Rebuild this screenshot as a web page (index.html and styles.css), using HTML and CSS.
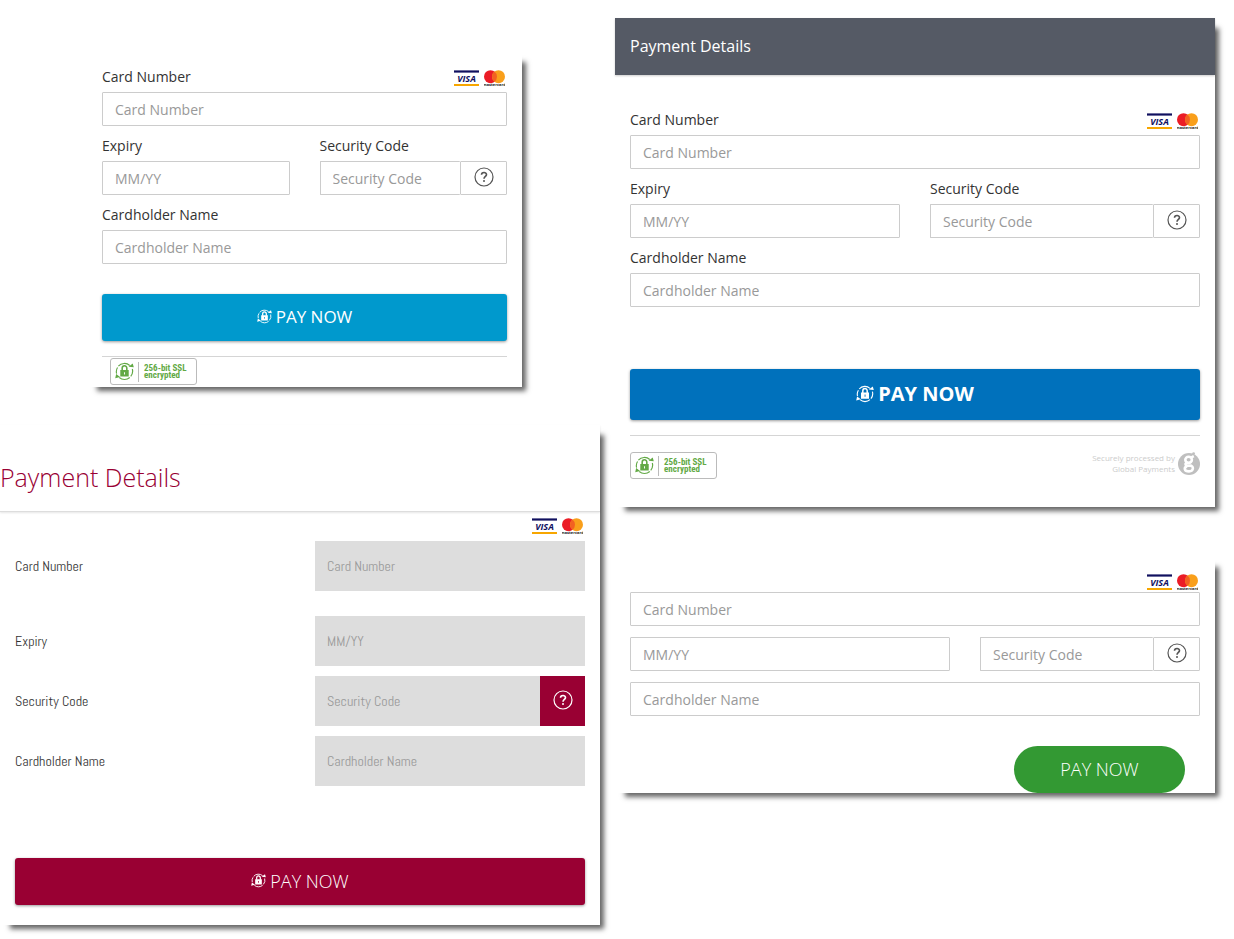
FILE: index.html
```html
<!DOCTYPE html>
<html lang="en">
<head>
<meta charset="utf-8">
<title>Payment Details</title>
<link rel="stylesheet" href="styles.css">
</head>
<body>
<svg class="sprite" aria-hidden="true">
  <symbol id="visa" viewBox="0 0 25 17">
    <rect y="0.4" width="25" height="2.2" fill="#10105f"/>
    <rect y="14" width="25" height="2" fill="#f7a600"/>
    <text x="12.5" y="11.6" text-anchor="middle" class="visa-word">VISA</text>
  </symbol>
  <symbol id="mastercard" viewBox="0 0 21 17">
    <circle cx="6.5" cy="6.7" r="6.5" fill="#eb1c26"/>
    <circle cx="14.5" cy="6.7" r="6.5" fill="#f99f1b"/>
    <path d="M10.5 1.6a6.5 6.5 0 0 1 0 10.2a6.5 6.5 0 0 1 0-10.2z" fill="#f26122"/>
    <text x="10.8" y="16.2" text-anchor="middle" class="mc-word">mastercard.</text>
  </symbol>
  <symbol id="secure" viewBox="0 0 18 18">
    <path d="M3.2 4A7.6 7.6 0 0 1 14 3.3M16.4 6.6A7.6 7.6 0 0 1 14.9 13.6M14 14.7A7.6 7.6 0 0 1 4 14.7M1.5 11A7.6 7.6 0 0 1 2.4 5.2" fill="none" stroke="currentColor" stroke-width="1.1"/>
    <path d="M12.8 4.6L17.8 5L16.8 1.4zM0.2 15.4L1.1 11.4L4.8 14.2z" fill="currentColor"/>
    <path d="M6.8 8V5.9a2.2 2.4 0 0 1 4.4 0V8" fill="none" stroke="currentColor" stroke-width="1.5"/>
    <path fill-rule="evenodd" d="M5 7.6h8v6.2H5zM8.6 9.6v2.2h.9V9.6z" fill="currentColor"/>
  </symbol>
  <symbol id="help" viewBox="0 0 20 20">
    <circle cx="10" cy="10" r="9" fill="none" stroke="currentColor" stroke-width="1.2"/>
    <path d="M7.5 7.8C7.5 4.7 12.6 4.8 12.5 7.6C12.4 9.4 10 9.4 10 11.8" fill="none" stroke="currentColor" stroke-width="1.6"/>
    <circle cx="10" cy="14" r="1" fill="currentColor"/>
  </symbol>
  <symbol id="globalpay" viewBox="0 0 22 23">
    <circle cx="11" cy="12" r="11" fill="#bfbfbf"/>
    <circle cx="15.6" cy="1.6" r="1.4" fill="#bfbfbf"/>
    <g fill="none" stroke="#fff" stroke-width="2.6">
      <ellipse cx="10.6" cy="7.8" rx="3.3" ry="3"/>
      <path d="M13.4 5.4L15.8 4.2M8.3 10.6C6.6 12.4 7.6 13.6 10 13.6H12C16 13.6 16 19.4 11 19.4C5.8 19.4 5.8 15.4 9 14.2"/>
    </g>
  </symbol>
</svg>

<main class="gallery">
  <div class="column column-left">
    <form class="card card-compact">
      <div class="field">
        <div class="field-head">
          <label for="a-number">Card Number</label>
          <span class="brands"><svg class="visa" role="img" aria-label="Visa"><use href="#visa"/></svg><svg class="mastercard" role="img" aria-label="Mastercard"><use href="#mastercard"/></svg></span>
        </div>
        <input id="a-number" type="text" placeholder="Card Number">
      </div>
      <div class="field-row">
        <div class="field">
          <div class="field-head"><label for="a-expiry">Expiry</label></div>
          <input id="a-expiry" type="text" placeholder="MM/YY">
        </div>
        <div class="field">
          <div class="field-head"><label for="a-code">Security Code</label></div>
          <div class="input-group">
            <input id="a-code" type="text" placeholder="Security Code">
            <button class="help" type="button" aria-label="Help"><svg><use href="#help"/></svg></button>
          </div>
        </div>
      </div>
      <div class="field">
        <div class="field-head"><label for="a-name">Cardholder Name</label></div>
        <input id="a-name" type="text" placeholder="Cardholder Name">
      </div>
      <button class="pay pay-sky" type="submit"><svg><use href="#secure"/></svg>PAY NOW</button>
      <footer class="card-foot">
        <div class="ssl"><svg><use href="#secure"/></svg><span class="ssl-text">256-bit SSL<br>encrypted</span></div>
      </footer>
    </form>

    <form class="card card-maroon">
      <h2 class="maroon-title">Payment Details</h2>
      <div class="maroon-body">
        <span class="brands"><svg class="visa" role="img" aria-label="Visa"><use href="#visa"/></svg><svg class="mastercard" role="img" aria-label="Mastercard"><use href="#mastercard"/></svg></span>
        <div class="line line-first">
          <label for="c-number">Card Number</label>
          <input id="c-number" type="text" placeholder="Card Number">
        </div>
        <div class="line">
          <label for="c-expiry">Expiry</label>
          <input id="c-expiry" type="text" placeholder="MM/YY">
        </div>
        <div class="line">
          <label for="c-code">Security Code</label>
          <div class="input-group">
            <input id="c-code" type="text" placeholder="Security Code">
            <button class="help" type="button" aria-label="Help"><svg><use href="#help"/></svg></button>
          </div>
        </div>
        <div class="line">
          <label for="c-name">Cardholder Name</label>
          <input id="c-name" type="text" placeholder="Cardholder Name">
        </div>
        <button class="pay pay-maroon" type="submit"><svg><use href="#secure"/></svg>PAY NOW</button>
      </div>
    </form>
  </div>

  <div class="column column-right">
    <form class="card card-full">
      <h2 class="bar-title">Payment Details</h2>
      <div class="full-body">
        <div class="field">
          <div class="field-head">
            <label for="b-number">Card Number</label>
            <span class="brands"><svg class="visa" role="img" aria-label="Visa"><use href="#visa"/></svg><svg class="mastercard" role="img" aria-label="Mastercard"><use href="#mastercard"/></svg></span>
          </div>
          <input id="b-number" type="text" placeholder="Card Number">
        </div>
        <div class="field-row">
          <div class="field">
            <div class="field-head"><label for="b-expiry">Expiry</label></div>
            <input id="b-expiry" type="text" placeholder="MM/YY">
          </div>
          <div class="field">
            <div class="field-head"><label for="b-code">Security Code</label></div>
            <div class="input-group">
              <input id="b-code" type="text" placeholder="Security Code">
              <button class="help" type="button" aria-label="Help"><svg><use href="#help"/></svg></button>
            </div>
          </div>
        </div>
        <div class="field">
          <div class="field-head"><label for="b-name">Cardholder Name</label></div>
          <input id="b-name" type="text" placeholder="Cardholder Name">
        </div>
        <button class="pay pay-blue" type="submit"><svg><use href="#secure"/></svg>PAY NOW</button>
        <footer class="card-foot">
          <div class="ssl"><svg><use href="#secure"/></svg><span class="ssl-text">256-bit SSL<br>encrypted</span></div>
          <div class="processor"><span>Securely processed by<br>Global Payments</span><svg><use href="#globalpay"/></svg></div>
        </footer>
      </div>
    </form>

    <form class="card card-plain">
      <span class="brands"><svg class="visa" role="img" aria-label="Visa"><use href="#visa"/></svg><svg class="mastercard" role="img" aria-label="Mastercard"><use href="#mastercard"/></svg></span>
      <input type="text" aria-label="Card Number" placeholder="Card Number">
      <div class="plain-row">
        <input type="text" aria-label="Expiry" placeholder="MM/YY">
        <div class="input-group">
          <input type="text" aria-label="Security Code" placeholder="Security Code">
          <button class="help" type="button" aria-label="Help"><svg><use href="#help"/></svg></button>
        </div>
      </div>
      <input type="text" aria-label="Cardholder Name" placeholder="Cardholder Name">
      <button class="pay pay-green" type="submit">PAY NOW</button>
    </form>
  </div>
</main>
</body>
</html>
```
FILE: styles.css
```css
* {
  box-sizing: border-box;
}

body {
  margin: 0;
  background: #fff;
  color: #333;
  font-family: "Open Sans", sans-serif;
  font-size: 14px;
  line-height: 20px;
}

input,
button {
  margin: 0;
  font: inherit;
}

.sprite {
  display: none;
}

.visa-word {
  font: italic 700 9px "Open Sans", sans-serif;
  fill: #10105f;
}

.mc-word {
  font: 700 4px "Open Sans", sans-serif;
  fill: #222;
}

.gallery {
  display: grid;
  grid-template-columns: 1fr 1fr;
  gap: 15px;
  padding: 0 19px 14px 0;
}

.column {
  display: flex;
  flex-direction: column;
}

.column-left {
  gap: 38px;
  padding-top: 52px;
}

.column-right {
  gap: 50px;
  padding-top: 18px;
}

.card {
  background: #fff;
  box-shadow: 7px 7px 5px -3px #666;
}

/* Fields */

.field {
  min-width: 0;
  margin-bottom: 10px;
}

.field-head {
  display: flex;
  justify-content: space-between;
  align-items: flex-end;
  height: 20px;
  margin-bottom: 5px;
}

.field-row {
  display: grid;
  grid-template-columns: 1fr 1fr;
  gap: 30px;
}

input {
  display: block;
  width: 100%;
  min-width: 0;
  height: 34px;
  padding: 1px 12px 0;
  border: 1px solid #ccc;
  border-radius: 1px;
  background: #fff;
  color: #333;
}

input::placeholder {
  color: #999;
  opacity: 1;
}

.input-group {
  display: flex;
  min-width: 0;
}

.input-group input {
  flex: 1;
  border-right: 0;
}

.help {
  display: flex;
  flex: none;
  justify-content: center;
  align-items: center;
  width: 47px;
  padding: 0 0 2px;
  border: 1px solid #ccc;
  border-radius: 1px;
  background: #fff;
  color: #555;
}

.help svg {
  width: 20px;
  height: 20px;
}

.brands {
  display: flex;
  justify-content: flex-end;
  gap: 5px;
  padding-right: 2px;
}

.visa {
  width: 25px;
  height: 17px;
}

.mastercard {
  width: 21px;
  height: 17px;
}

/* Pay buttons */

.pay {
  display: flex;
  justify-content: center;
  align-items: center;
  gap: 4px;
  width: 100%;
  height: 47px;
  padding: 0 0 2px;
  border: 0;
  border-radius: 3px;
  box-shadow: 0 1px 3px rgba(0, 0, 0, 0.4);
  color: #fff;
  font-size: 18px;
  font-weight: 300;
}

.pay svg {
  width: 15px;
  height: 15px;
}

.pay-sky {
  margin-top: 30px;
  background: #0099cd;
  font-size: 17px;
  font-weight: 400;
}

.pay-blue {
  height: 51px;
  margin-top: 62px;
  background: #0071bc;
  font-size: 20px;
  font-weight: 700;
}

.pay-blue svg {
  width: 18px;
  height: 18px;
}

.pay-maroon {
  margin-top: 72px;
  background: #990033;
}

.pay-green {
  align-self: flex-end;
  width: 171px;
  margin: 19px 15px 0 0;
  border-radius: 24px;
  background: #339933;
  box-shadow: none;
}

/* Footer */

.card-foot {
  display: flex;
  justify-content: space-between;
  margin-top: 15px;
  border-top: 1px solid #d5d5d5;
}

.ssl {
  display: flex;
  align-items: center;
  width: 87px;
  height: 27px;
  padding: 0 4px;
  border: 1px solid #bbb;
  border-radius: 3px;
  color: #62a945;
}

.ssl svg {
  width: 19px;
  height: 19px;
}

.ssl-text {
  margin-left: 4px;
  padding: 3px 0 3px 5px;
  border-left: 1px solid #bbb;
  font: 700 9px/7px "Roboto Condensed", "Liberation Sans Narrow", Roboto, sans-serif;
}

.processor {
  display: flex;
  gap: 3px;
  color: #ccc;
  font-size: 8px;
  line-height: 11px;
  text-align: right;
}

.processor svg {
  width: 22px;
  height: 23px;
}

/* Compact form */

.card-compact {
  width: 435px;
  max-width: 100%;
  margin-left: 87px;
  padding: 15px 15px 2px;
}

.card-compact .ssl {
  margin: 1px 0 0 8px;
}

/* Full form */

.bar-title {
  margin: 0;
  padding: 16px 15px 17px;
  background: #555a65;
  box-shadow: 0 1px 2px rgba(0, 0, 0, 0.2);
  color: #fff;
  font-size: 16px;
  font-weight: 400;
  line-height: 24px;
}

.full-body {
  padding: 35px 15px 28px;
}

.card-full .card-foot {
  padding-top: 16px;
}

/* Plain form */

.card-plain {
  display: flex;
  flex-direction: column;
  gap: 11px;
  padding: 17px 15px 0;
}

.card-plain .brands {
  height: 18px;
  margin-bottom: -11px;
}

.plain-row {
  display: grid;
  grid-template-columns: 320fr 220fr;
  gap: 30px;
}

/* Maroon form */

.maroon-title {
  margin: 0;
  padding: 35px 0 17px;
  border-bottom: 1px solid #ddd;
  box-shadow: 0 1px 2px rgba(0, 0, 0, 0.1);
  color: #990033;
  font-size: 25px;
  font-weight: 300;
  line-height: 34px;
}

.maroon-body {
  padding: 6px 15px 20px;
}

.card-maroon .line {
  display: grid;
  grid-template-columns: 1fr 1fr;
  gap: 30px;
  align-items: center;
  margin-top: 10px;
  font-family: Abel, "Liberation Sans Narrow", Roboto, sans-serif;
}

.card-maroon .line-first {
  margin: 6px 0 25px;
}

.card-maroon input {
  height: 50px;
  padding: 0 12px 1px;
  border: 0;
  border-radius: 0;
  background: #ddd;
}

.card-maroon .help {
  width: 45px;
  border: 0;
  border-radius: 0;
  background: #990033;
  color: #fff;
}
```
